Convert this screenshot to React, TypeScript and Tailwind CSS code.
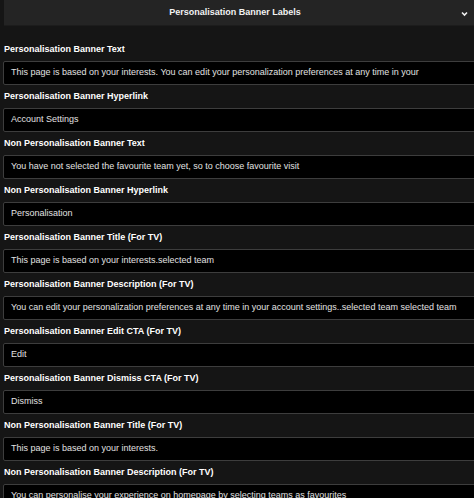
import React from "react";

const fields: { label: string; value: string }[] = [
  {
    label: "Personalisation Banner Text",
    value:
      "This page is based on your interests. You can edit your personalization preferences at any time in your",
  },
  { label: "Personalisation Banner Hyperlink", value: "Account Settings" },
  {
    label: "Non Personalisation Banner Text",
    value: "You have not selected the favourite team yet, so to choose favourite visit",
  },
  { label: "Non Personalisation Banner Hyperlink", value: "Personalisation" },
  {
    label: "Personalisation Banner Title (For TV)",
    value: "This page is based on your interests.selected team",
  },
  {
    label: "Personalisation Banner Description (For TV)",
    value:
      "You can edit your personalization preferences at any time in your account settings..selected team selected team",
  },
  { label: "Personalisation Banner Edit CTA (For TV)", value: "Edit" },
  { label: "Personalisation Banner Dismiss CTA (For TV)", value: "Dismiss" },
  { label: "Non Personalisation Banner Title (For TV)", value: "This page is based on your interests." },
  {
    label: "Non Personalisation Banner Description (For TV)",
    value: "You can personalise your experience on homepage by selecting teams as favourites",
  },
];

export default function App() {
  return (
    <div
      className="w-[474px] h-[498px] overflow-hidden bg-[#151515] text-white"
      style={{ fontFamily: '"Liberation Sans", Arial, sans-serif' }}
    >
      <div className="w-[486px]">
        {/* accordion header */}
        <div className="ml-[4px] h-[26px] bg-[#242424] border-b border-[#1c1c1c] relative flex items-center justify-center">
          <span className="text-[9px] font-bold text-[#f2f2f2] -ml-[20px]">Personalisation Banner Labels</span>
          <svg
            className="absolute left-[457px] top-[11px]"
            width="7"
            height="6"
            viewBox="0 0 7 6"
            fill="none"
          >
            <polyline points="1,1.5 3.5,4 6,1.5" stroke="#f0f0f0" strokeWidth="1.6" />
          </svg>
        </div>

        <div className="mt-[12px] pl-[3px]">
          {fields.map((f) => (
            <div key={f.label}>
              <div className="h-[23px] flex items-center pl-[1px] text-[9px] font-bold text-white">
                {f.label}
              </div>
              <div className="h-[24px] bg-black border border-[#3d3d3d] rounded-[2px] pl-[7px] pr-[12px] flex items-center overflow-hidden">
                <span className="whitespace-nowrap text-[9px] text-[#e2e2e2]">{f.value}</span>
              </div>
            </div>
          ))}
        </div>
      </div>
    </div>
  );
}
